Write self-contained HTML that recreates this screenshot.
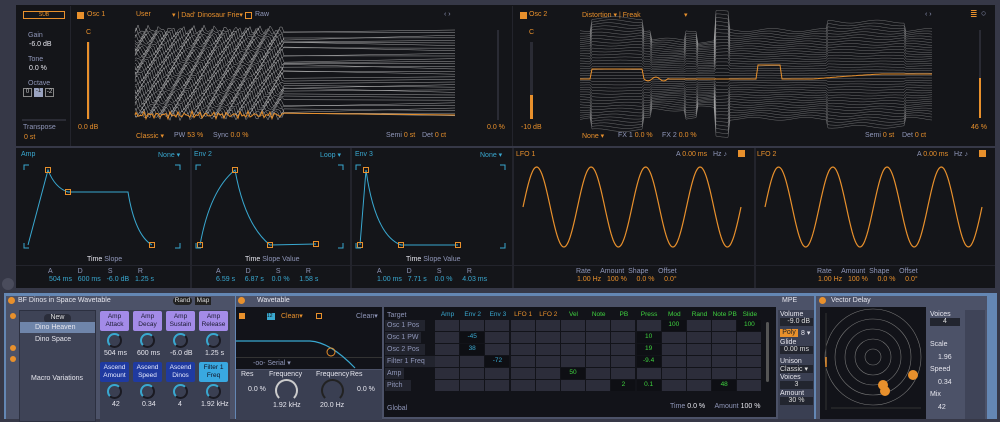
<!DOCTYPE html>
<html><head><meta charset="utf-8"><style>
*{box-sizing:border-box;margin:0;padding:0}
body{width:1000px;height:419px;background:#363847;font-family:"Liberation Sans",sans-serif;font-size:7px;color:#9aa3c0;position:relative;overflow:hidden}
.a{position:absolute}
.p{position:absolute;background:#121319}
.o{color:#e8902c}.b{color:#39a8d0}.g{color:#3fd23f}.w{color:#e6e6ee}.l{color:#8f96b8}
#s{position:absolute;left:0;top:0;z-index:5;pointer-events:none}
.cell{position:absolute;background:#2c2d3a}
.mh{position:absolute;font-size:6.5px;text-align:center;width:25px}
.kn{position:absolute;border-radius:50%;border:2px solid #1a1a22;border-top-color:#39a8d0;border-left-color:#39a8d0}
.mb{position:absolute;width:29px;height:20px;background:#a38be8;color:#1a1a30;font-size:6.5px;text-align:center;line-height:8px;padding-top:2px;border-radius:2px}
.mb2{background:#1f3aa0;color:#e8ecff}
</style></head><body>
<div class="p" style="left:16px;top:5px;width:979px;height:141px;background:#141519"></div>
<div class="a" style="left:70px;top:6px;width:1px;height:140px;background:#23242c"></div>
<div class="a" style="left:512px;top:6px;width:1px;height:140px;background:#23242c"></div>
<div class="a" style="left:23px;top:11px;width:42px;height:8px;border:1px solid #e8902c;color:#e8902c;font-size:5px;text-align:center;line-height:6px">SUB</div>
<div class="a l" style="left:28px;top:32px">Gain</div><div class="a w" style="left:29px;top:41px">-6.0 dB</div>
<div class="a l" style="left:28px;top:56px">Tone</div><div class="a w" style="left:29px;top:65px">0.0 %</div>
<div class="a l" style="left:28px;top:80px">Octave</div>
<div class="a" style="left:23px;top:88px;width:9px;height:9px;border:1px solid #888;color:#ccc;font-size:6px;text-align:center">0</div>
<div class="a" style="left:34px;top:88px;width:9px;height:9px;background:#9aa3c0;color:#222;font-size:6px;text-align:center">-1</div>
<div class="a" style="left:45px;top:88px;width:9px;height:9px;border:1px solid #888;color:#ccc;font-size:6px;text-align:center">-2</div>
<div class="a" style="left:22px;top:119px;width:44px;height:2px;background:#2a2b34"></div>
<div class="a l" style="left:23px;top:124px">Transpose</div><div class="a o" style="left:24px;top:134px">0 st</div>
<div class="a" style="left:77px;top:12px;width:7px;height:7px;background:#e8902c"></div>
<div class="a o" style="left:87px;top:11px">Osc 1</div>
<div class="a o" style="left:136px;top:11px">User</div><div class="a o" style="left:172px;top:11px">▾ | Dad' Dinosaur Frie▾</div>
<div class="a" style="left:245px;top:12px;width:7px;height:7px;border:1px solid #e8902c"></div><div class="a l" style="left:255px;top:11px">Raw</div>
<div class="a l" style="left:444px;top:11px">‹ ›</div>
<div class="a o" style="left:86px;top:29px">C</div>
<div class="a" style="left:87px;top:42px;width:3px;height:77px;background:#2a2b34"></div>
<div class="a" style="left:87px;top:42px;width:2px;height:77px;background:#e8902c"></div>
<div class="a o" style="left:78px;top:124px">0.0 dB</div>
<div class="a o" style="left:136px;top:132px">Classic ▾</div><div class="a l" style="left:174px;top:132px">PW <span class="o">53 %</span></div><div class="a l" style="left:213px;top:132px">Sync <span class="o">0.0 %</span></div>
<div class="a l" style="left:386px;top:132px">Semi <span class="o">0 st</span></div><div class="a l" style="left:422px;top:132px">Det <span class="o">0 ct</span></div>
<div class="a" style="left:497px;top:30px;width:2px;height:90px;background:#2a2b34"></div>
<div class="a o" style="left:487px;top:124px">0.0 %</div>
<div class="a" style="left:520px;top:12px;width:7px;height:7px;background:#e8902c"></div>
<div class="a o" style="left:529px;top:11px">Osc 2</div>
<div class="a o" style="left:582px;top:11px">Distortion ▾ | Freak</div><div class="a o" style="left:684px;top:11px">▾</div>
<div class="a l" style="left:925px;top:11px">‹ ›</div><div class="a o" style="left:970px;top:9px;font-size:9px">≣</div><div class="a l" style="left:981px;top:8px;font-size:9px">○</div>
<div class="a o" style="left:529px;top:29px">C</div>
<div class="a" style="left:530px;top:42px;width:3px;height:77px;background:#2a2b34"></div>
<div class="a" style="left:530px;top:95px;width:3px;height:24px;background:#e8902c"></div>
<div class="a o" style="left:521px;top:124px">-10 dB</div>
<div class="a o" style="left:582px;top:132px">None ▾</div><div class="a l" style="left:618px;top:132px">FX 1 <span class="o">0.0 %</span></div><div class="a l" style="left:662px;top:132px">FX 2 <span class="o">0.0 %</span></div>
<div class="a l" style="left:865px;top:132px">Semi <span class="o">0 st</span></div><div class="a l" style="left:902px;top:132px">Det <span class="o">0 ct</span></div>
<div class="a" style="left:979px;top:30px;width:2px;height:88px;background:#2a2b34"></div><div class="a" style="left:979px;top:78px;width:2px;height:40px;background:#e8902c"></div>
<div class="a o" style="left:971px;top:124px">46 %</div>
<div class="p" style="left:16px;top:148px;width:979px;height:140px;background:#141519"></div>
<div class="a" style="left:16px;top:265px;width:979px;height:1px;background:#23242c"></div>
<div class="a" style="left:190px;top:148px;width:2px;height:140px;background:#23242c"></div>
<div class="a" style="left:350px;top:148px;width:2px;height:140px;background:#23242c"></div>
<div class="a" style="left:512px;top:148px;width:2px;height:140px;background:#23242c"></div>
<div class="a" style="left:754px;top:148px;width:2px;height:140px;background:#23242c"></div>
<div class="a b" style="left:21px;top:151px">Amp</div><div class="a b" style="left:158px;top:151px">None ▾</div>
<div class="a b" style="left:194px;top:151px">Env 2</div><div class="a b" style="left:320px;top:151px">Loop ▾</div>
<div class="a b" style="left:355px;top:151px">Env 3</div><div class="a b" style="left:480px;top:151px">None ▾</div>
<div class="a o" style="left:516px;top:151px">LFO 1</div><div class="a l" style="left:676px;top:151px">A <span class="o">0.00 ms</span> &nbsp; Hz ♪</div><div class="a" style="left:738px;top:150px;width:7px;height:7px;background:#e8902c"></div>
<div class="a o" style="left:757px;top:151px">LFO 2</div><div class="a l" style="left:917px;top:151px">A <span class="o">0.00 ms</span> &nbsp; Hz ♪</div><div class="a" style="left:979px;top:150px;width:7px;height:7px;background:#e8902c"></div>
<div class="a w" style="left:87px;top:256px">Time <span class="l">Slope</span></div>
<div class="a w" style="left:245px;top:256px">Time <span class="l">Slope Value</span></div>
<div class="a w" style="left:406px;top:256px">Time <span class="l">Slope Value</span></div>
<div class="a l" style="left:48px;top:268px">A &nbsp; &nbsp; &nbsp; &nbsp; &nbsp; &nbsp; D &nbsp; &nbsp; &nbsp; &nbsp; &nbsp; &nbsp; S &nbsp; &nbsp; &nbsp; &nbsp; &nbsp; &nbsp; R</div>
<div class="a b" style="left:49px;top:276px">504 ms &nbsp; 600 ms &nbsp; -6.0 dB &nbsp; 1.25 s</div>
<div class="a l" style="left:216px;top:268px">A &nbsp; &nbsp; &nbsp; &nbsp; &nbsp; &nbsp; D &nbsp; &nbsp; &nbsp; &nbsp; &nbsp; &nbsp; S &nbsp; &nbsp; &nbsp; &nbsp; &nbsp; &nbsp; R</div>
<div class="a b" style="left:216px;top:276px">6.59 s &nbsp; &nbsp; 6.87 s &nbsp; &nbsp;0.0 % &nbsp; &nbsp; 1.58 s</div>
<div class="a l" style="left:377px;top:268px">A &nbsp; &nbsp; &nbsp; &nbsp; &nbsp; &nbsp; D &nbsp; &nbsp; &nbsp; &nbsp; &nbsp; &nbsp; S &nbsp; &nbsp; &nbsp; &nbsp; &nbsp; &nbsp; R</div>
<div class="a b" style="left:377px;top:276px">1.00 ms &nbsp; 7.71 s &nbsp; &nbsp;0.0 % &nbsp; &nbsp; 4.03 ms</div>
<div class="a l" style="left:576px;top:268px">Rate &nbsp; &nbsp; Amount &nbsp;Shape &nbsp; &nbsp; Offset</div>
<div class="a o" style="left:577px;top:276px">1.00 Hz &nbsp; 100 % &nbsp; &nbsp; 0.0 % &nbsp; &nbsp; 0.0°</div>
<div class="a l" style="left:817px;top:268px">Rate &nbsp; &nbsp; Amount &nbsp;Shape &nbsp; &nbsp; Offset</div>
<div class="a o" style="left:818px;top:276px">1.00 Hz &nbsp; 100 % &nbsp; &nbsp; 0.0 % &nbsp; &nbsp; 0.0°</div>
<div class="a" style="left:2px;top:278px;width:12px;height:12px;border-radius:50%;background:#4a4c5c"></div>
<svg width="1000" height="419" id="s"></svg>
<div class="a" style="left:4px;top:293px;width:993px;height:126px;background:#6487b4"></div>
<div class="a" style="left:6px;top:296px;width:229px;height:123px;background:#4c5268"></div>
<div class="a" style="left:236px;top:296px;width:578px;height:123px;background:#4c5268"></div>
<div class="a" style="left:816px;top:296px;width:171px;height:123px;background:#4c5268"></div>
<div class="a" style="left:8px;top:297px;width:7px;height:7px;border-radius:50%;background:#e8902c"></div>
<div class="a w" style="left:18px;top:297px">BF Dinos in Space Wavetable</div>
<div class="a" style="left:173px;top:297px;width:19px;height:8px;border-radius:4px;background:#222;color:#ddd;font-size:6.5px;text-align:center">Rand</div>
<div class="a" style="left:195px;top:297px;width:16px;height:8px;background:#222;color:#ddd;font-size:6.5px;text-align:center">Map</div>
<div class="a" style="left:238px;top:297px;width:7px;height:7px;border-radius:50%;background:#e8902c"></div>
<div class="a w" style="left:257px;top:297px">Wavetable</div>
<div class="a w" style="left:782px;top:297px">MPE</div>
<div class="a" style="left:819px;top:297px;width:7px;height:7px;border-radius:50%;background:#e8902c"></div>
<div class="a w" style="left:831px;top:297px">Vector Delay</div>
<div class="a" style="left:19px;top:310px;width:77px;height:112px;background:#3e4356;border:1px solid #2c3040"></div>
<div class="a" style="left:44px;top:314px;width:27px;height:9px;border-radius:4px;background:#2a2d3a;color:#ddd;text-align:center">New</div>
<div class="a" style="left:20px;top:322px;width:75px;height:11px;background:#6f85aa"></div>
<div class="a w" style="left:35px;top:324px">Dino Heaven</div>
<div class="a w" style="left:35px;top:336px">Dino Space</div>
<div class="a w" style="left:31px;top:375px">Macro Variations</div>
<div class="a" style="left:10px;top:313px;width:6px;height:6px;border-radius:50%;background:#e8902c"></div>
<div class="a" style="left:10px;top:345px;width:6px;height:6px;border-radius:50%;background:#e8902c"></div>
<div class="a" style="left:10px;top:356px;width:6px;height:6px;border-radius:50%;background:#e8902c"></div>
<div class="a" style="left:100px;top:310px;width:130px;height:112px;background:#3a3f52"></div>
<div class="mb" style="left:100px;top:311px">Amp<br>Attack</div><div class="mb" style="left:133px;top:311px">Amp<br>Decay</div><div class="mb" style="left:166px;top:311px">Amp<br>Sustain</div><div class="mb" style="left:199px;top:311px">Amp<br>Release</div>
<div class="mb mb2" style="left:100px;top:362px">Ascend<br>Amount</div><div class="mb mb2" style="left:133px;top:362px">Ascend<br>Speed</div><div class="mb mb2" style="left:166px;top:362px">Ascend<br>Dinos</div><div class="mb" style="left:199px;top:362px;background:#39a8e0;color:#112">Filter 1<br>Freq</div>
<div class="kn" style="left:107px;top:333px;width:15px;height:15px"></div><div class="kn" style="left:140px;top:333px;width:15px;height:15px"></div><div class="kn" style="left:173px;top:333px;width:15px;height:15px"></div><div class="kn" style="left:206px;top:333px;width:15px;height:15px"></div>
<div class="kn" style="left:107px;top:384px;width:15px;height:15px"></div><div class="kn" style="left:140px;top:384px;width:15px;height:15px"></div><div class="kn" style="left:173px;top:384px;width:15px;height:15px"></div><div class="kn" style="left:206px;top:384px;width:15px;height:15px"></div>
<div class="a w" style="left:104px;top:350px">504 ms</div><div class="a w" style="left:137px;top:350px">600 ms</div><div class="a w" style="left:170px;top:350px">-6.0 dB</div><div class="a w" style="left:205px;top:350px">1.25 s</div>
<div class="a w" style="left:112px;top:401px">42</div><div class="a w" style="left:142px;top:401px">0.34</div><div class="a w" style="left:178px;top:401px">4</div><div class="a w" style="left:201px;top:401px">1.92 kHz</div>
<div class="a" style="left:236px;top:307px;width:146px;height:62px;background:#121319"></div>
<div class="a" style="left:239px;top:313px;width:6px;height:6px;background:#e8902c"></div>
<div class="a" style="left:267px;top:313px;width:8px;height:7px;background:#39a8d0;color:#111;font-size:5px">12</div>
<div class="a o" style="left:281px;top:312px">Clean▾</div><div class="a l" style="left:356px;top:312px">Clean▾</div>
<div class="a" style="left:316px;top:313px;width:6px;height:6px;border:1px solid #e8902c"></div>
<div class="a" style="left:236px;top:357px;width:146px;height:1px;background:#333"></div>
<div class="a l" style="left:253px;top:359px">-oo- Serial ▾</div>
<div class="a" style="left:236px;top:370px;width:146px;height:50px;background:#3a3f52"></div>
<div class="a w" style="left:241px;top:371px">Res</div><div class="a w" style="left:269px;top:371px">Frequency</div><div class="a w" style="left:316px;top:371px">Frequency</div><div class="a w" style="left:350px;top:371px">Res</div>
<div class="a w" style="left:248px;top:386px">0.0 %</div><div class="a w" style="left:357px;top:386px">0.0 %</div>
<div class="a w" style="left:273px;top:402px">1.92 kHz</div><div class="a w" style="left:320px;top:402px">20.0 Hz</div>
<div class="a" style="left:275px;top:379px;width:23px;height:23px;border-radius:50%;border:2px solid #ccc;border-bottom-color:transparent"></div>
<div class="a" style="left:321px;top:379px;width:23px;height:23px;border-radius:50%;border:2px solid #222;border-bottom-color:transparent"></div>
<div class="a" style="left:384px;top:307px;width:392px;height:110px;background:#121319"></div>
<div class="a l" style="left:387px;top:312px">Target</div>
<div class="a l" style="left:387px;top:405px">Global</div>
<div class="a l" style="left:670px;top:403px">Time <span class="w">0.0 %</span> &nbsp; &nbsp; Amount <span class="w">100 %</span></div>
<div id="mx"></div>
<div class="a" style="left:766px;top:322px;width:3px;height:60px;border-radius:2px;background:#555"></div>
<div class="a" style="left:778px;top:310px;width:36px;height:109px;background:#3a3f52"></div>
<div class="a w" style="left:780px;top:311px">Volume</div>
<div class="a" style="left:780px;top:318px;width:33px;height:8px;background:#22252f;color:#ddd;text-align:right;padding-right:3px">-9.0 dB</div>
<div class="a" style="left:780px;top:329px;width:18px;height:8px;background:#e8902c;color:#222;text-align:center">Poly</div><div class="a w" style="left:801px;top:329px">8 ▾</div>
<div class="a w" style="left:780px;top:339px">Glide</div><div class="a" style="left:780px;top:346px;width:33px;height:8px;background:#22252f;color:#ddd;text-align:center">0.00 ms</div>
<div class="a w" style="left:780px;top:358px">Unison</div><div class="a" style="left:780px;top:365px;width:33px;height:8px;background:#22252f;color:#ddd">Classic ▾</div>
<div class="a w" style="left:780px;top:374px">Voices</div><div class="a" style="left:780px;top:381px;width:33px;height:8px;background:#22252f;color:#ddd;text-align:center">3</div>
<div class="a w" style="left:780px;top:390px">Amount</div><div class="a" style="left:780px;top:397px;width:33px;height:8px;background:#22252f;color:#ddd;text-align:center">30 %</div>
<div class="a" style="left:820px;top:307px;width:106px;height:112px;background:#121319"></div>
<div class="a w" style="left:930px;top:311px">Voices</div><div class="a" style="left:930px;top:318px;width:30px;height:8px;background:#22252f;color:#ddd;text-align:center">4</div>
<div class="a w" style="left:930px;top:341px">Scale</div><div class="a w" style="left:938px;top:354px">1.96</div>
<div class="a w" style="left:930px;top:366px">Speed</div><div class="a w" style="left:938px;top:379px">0.34</div>
<div class="a w" style="left:930px;top:391px">Mix</div><div class="a w" style="left:938px;top:404px">42</div>
<div class="a" style="left:965px;top:310px;width:20px;height:109px;background:#3f4458"></div>
<script>
var s=document.getElementById('s'),h='';
function P(d,c,w,o){h+='<path d="'+d+'" fill="none" stroke="'+c+'" stroke-width="'+(w||1)+'" opacity="'+(o||1)+'"/>';}
for(var k=0;k<34;k++){var y=30+k*2.6,d='M135 '+y.toFixed(1);for(var x=136;x<=285;x+=2){d+=' L'+x+' '+(y+Math.sin(x*0.9+k*1.7)*5*Math.sin(x*0.33+k)).toFixed(1);}d+=' L455 '+y.toFixed(1);P(d,'#ddd',0.5,0.7);}
var d='M135 115';for(var x=136;x<=285;x+=2)d+=' L'+x+' '+(115+Math.sin(x*1.3)*4*Math.sin(x*0.4)).toFixed(1);d+=' L455 115';P(d,'#e8902c',1);
function f2(x){var t=(x-580)/353;var v=0;
v+= (t>0.03&&t<0.18)?-1:0; v+= (t>0.38&&t<0.42)?-1.5:0; v+=(t>0.7&&t<0.92)?-0.7:0; v+=(t>0.2&&t<0.3)?0.8:0;v+=(t>0.33&&t<0.38)?1:0;
return v;}
for(var k=0;k<38;k++){var y=30+k*2.4,d='',sc=(k-19)/19;for(var x=580;x<=933;x+=2){var v=y+12*sc*f2(x)*-1+1.5*Math.sin(x*0.12+k*0.4)*(Math.abs(sc));d+=(x==580?'M':' L')+x+' '+v.toFixed(1);}P(d,'#ccc',0.45,0.55);}
d='';for(var x=580;x<=933;x+=2){var t=(x-580)/353;var v=79+(t>0.03&&t<0.18?-10:0)+(t>0.5&&t<0.57?-14:0)+(t>0.66?-6*Math.sin(Math.min(1,(t-0.66)*5)):0)+2*Math.sin(x*0.4)*(t>0.18&&t<0.25?1:0);d+=(x==580?'M':' L')+x+' '+v.toFixed(1);}P(d,'#e8902c',1);
var c='#39a8d0';
P('M28 245 L48 170 Q55 188 68 192 L128 192 Q135 235 152 245',c,1);
P('M200 245 Q210 190 235 170 Q245 225 270 245 L316 244',c,1);
P('M360 245 L366 170 Q375 235 401 245 L458 245',c,1);
[[48,170],[68,192],[152,245],[200,245],[235,170],[270,245],[316,244],[360,245],[366,170],[401,245],[458,245]].forEach(function(p){h+='<rect x="'+(p[0]-2.5)+'" y="'+(p[1]-2.5)+'" width="5" height="5" fill="none" stroke="#e8902c" stroke-width="1"/>';});
[[24,165,180,248],[196,165,343,248],[356,165,505,248]].forEach(function(b){P('M'+b[0]+' '+(b[1]+5)+' V'+b[1]+' H'+(b[0]+5)+' M'+(b[2]-5)+' '+b[1]+' H'+b[2]+' V'+(b[1]+5)+' M'+b[0]+' '+(b[3]-5)+' V'+b[3]+' H'+(b[0]+5)+' M'+(b[2]-5)+' '+b[3]+' H'+b[2]+' V'+(b[3]-5),c,1);});
[[523,741],[765,982]].forEach(function(r){var d='';for(var x=r[0];x<=r[1];x++){var t=(x-r[0])/(r[1]-r[0])*4*2*Math.PI;d+=(x==r[0]?'M':' L')+x+' '+(207-40*Math.sin(t)).toFixed(1);}P(d,'#e8902c',1.2);});
P('M236 341 L310 341 Q330 342 355 368','#39a8d0',1.2);
h+='<circle cx="331" cy="352" r="4" fill="none" stroke="#e8902c"/>';
[8,18,28,38,48].forEach(function(r){h+='<circle cx="873" cy="357" r="'+r+'" fill="none" stroke="#777" stroke-width="0.6"/>';});
[[883,385],[885,391],[913,375]].forEach(function(p){h+='<circle cx="'+p[0]+'" cy="'+p[1]+'" r="5" fill="#e8902c"/>';});
P('M826 313 V410','#333',1);P('M826 357 V367','#e8902c',1.5);P('M831 408 H921','#333',1);
s.innerHTML=h;
var cols=['Amp','Env 2','Env 3','LFO 1','LFO 2','Vel','Note','PB','Press','Mod','Rand','Note PB','Slide'];
var cc=['b','b','b','o','o','g','g','g','g','g','g','g','g'];
var rows=['Osc 1 Pos','Osc 1 PW','Osc 2 Pos','Filter 1 Freq','Amp','Pitch'];
var vals={'0,9':'100','0,12':'100','1,1':'-45','1,8':'10','2,1':'38','2,8':'19','3,2':'-72','3,8':'-9.4','4,5':'50','5,7':'2','5,8':'0.1','5,11':'48'};
var m='';
cols.forEach(function(n,i){m+='<div class="mh '+cc[i]+'" style="left:'+(435+i*25.2)+'px;top:311px">'+n+'</div>';});
rows.forEach(function(n,j){var y=320+j*12;m+='<div class="a l" style="left:385px;top:'+y+'px;width:'+(n.length*3.5+8)+'px;height:11px;background:#22242e;padding:2px">'+n+'</div>';
cols.forEach(function(c,i){var v=vals[j+','+i];m+='<div class="cell" style="left:'+(435+i*25.2)+'px;top:'+y+'px;width:24px;height:11px;'+(v?'background:#0e0f14;':'')+'font-size:6.5px;text-align:center;line-height:10px"><span class="'+cc[i]+'">'+(v||'')+'</span></div>';});});
document.getElementById('mx').innerHTML=m;
</script>
</body></html>
